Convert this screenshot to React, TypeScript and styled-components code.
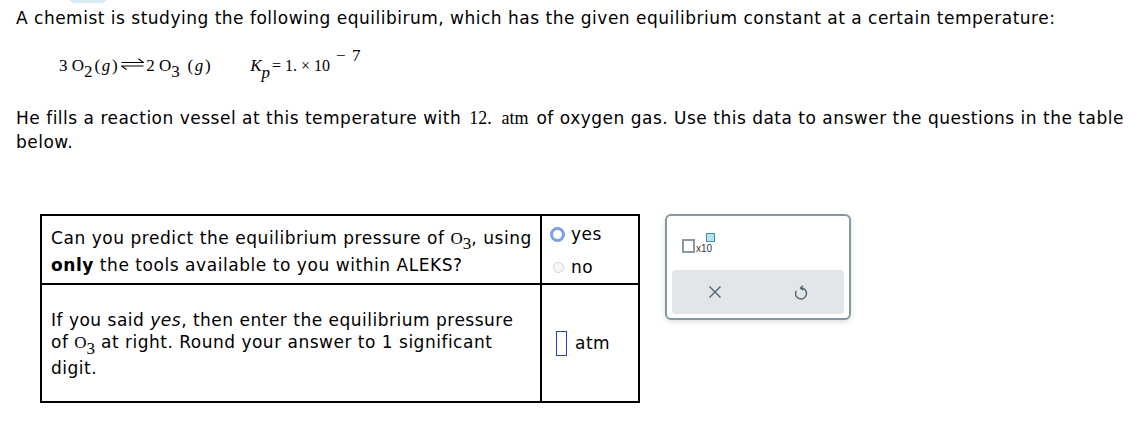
import React from "react";
import styled, { createGlobalStyle } from "styled-components";

const Global = createGlobalStyle`
  html, body { margin: 0; padding: 0; background: #fff; }
  body {
    font-family: "DejaVu Sans", Verdana, sans-serif;
    font-size: 17px;
    letter-spacing: 0.5px;
    color: #000;
  }
`;

const Page = styled.div`
  position: relative;
  width: 1142px;
  height: 428px;
  padding: 6px 0 0 16px;
  box-sizing: border-box;
  overflow: hidden;
`;

const TopTab = styled.div`
  position: absolute;
  left: 68px;
  top: -11px;
  width: 40px;
  height: 14px;
  border-radius: 8px;
  background: #d9ecf6;
`;

const Para = styled.p`
  margin: 0;
  line-height: 24px;
`;

const Serif = styled.span<{ $size?: number; $italic?: boolean; $spread?: number }>`
  font-family: "Liberation Serif", "Times New Roman", serif;
  font-size: ${(p) => p.$size ?? 16}px;
  font-style: ${(p) => (p.$italic ? "italic" : "normal")};
  letter-spacing: ${(p) => p.$spread ?? 0}px;
  line-height: 1;
`;

const Quantity = styled(Serif)`
  margin: 0 2px;
`;

const Equation = styled.div`
  box-sizing: border-box;
  height: 76px;
  padding: 21px 0 0 43px;
  line-height: 30px;
  font-family: "Liberation Serif", "Times New Roman", serif;
  font-size: 17px;
  letter-spacing: 0;
  white-space: pre;
`;

const Group = styled.span`
  margin-left: 2px;
  letter-spacing: 1.6px;
`;

const Sub = styled.span<{ $size?: number; $drop?: number }>`
  font-family: "Liberation Serif", "Times New Roman", serif;
  font-size: ${(p) => p.$size ?? 17}px;
  vertical-align: ${(p) => -(p.$drop ?? 6)}px;
  line-height: 1;
  letter-spacing: 0;
`;

const Value = styled(Serif)`
  margin-left: 2px;
`;

const Sup = styled.span`
  font-family: "Liberation Serif", "Times New Roman", serif;
  font-size: 17px;
  position: relative;
  top: -10px;
  line-height: 1;
  margin-left: 6px;
  letter-spacing: 1px;
`;

const Arrow = styled.svg`
  display: inline-block;
  width: 23px;
  height: 12px;
  margin: 0 2px 0 2px;
  vertical-align: 1px;
`;

const Gap = styled.span<{ $w: number }>`
  display: inline-block;
  width: ${(p) => p.$w}px;
`;

const Row = styled.div`
  display: flex;
  align-items: flex-start;
  gap: 25px;
  margin: 60px 0 0 24px;
`;

const Table = styled.div`
  display: grid;
  grid-template-columns: 498px 98px;
  grid-template-rows: 67px 118px;
  border: 2px solid #000;
  width: 596px;
  background: #fff;
`;

const Cell = styled.div<{ $right?: boolean; $bottom?: boolean }>`
  border-left: ${(p) => (p.$right ? "2px solid #000" : "none")};
  border-top: ${(p) => (p.$bottom ? "2px solid #000" : "none")};
  box-sizing: border-box;
  white-space: nowrap;
`;

const QuestionCell = styled(Cell)`
  padding: 9px 0 0 9px;
  line-height: 27px;
  letter-spacing: 0.55px;
`;

const QuestionCell2 = styled(Cell)`
  padding: 2px 0 0 9px;
  line-height: 22px;
  display: flex;
  align-items: center;
`;

const RadioCol = styled(Cell)`
  display: flex;
  flex-direction: column;
  padding: 8px 0 0 8px;
  gap: 13px;
`;

const RadioRow = styled.label`
  display: flex;
  align-items: center;
  height: 20px;
  line-height: 20px;
`;

const RadioDot = styled.span<{ $focused?: boolean }>`
  box-sizing: border-box;
  display: inline-block;
  border-radius: 50%;
  width: ${(p) => (p.$focused ? 15 : 11)}px;
  height: ${(p) => (p.$focused ? 15 : 11)}px;
  margin-left: ${(p) => (p.$focused ? 0 : 3)}px;
  margin-right: ${(p) => (p.$focused ? 6 : 7)}px;
  border: ${(p) => (p.$focused ? "3px solid #7d9ee9" : "1px solid #d2d2d2")};
  background: ${(p) => (p.$focused ? "#fff" : "#f7f7f7")};
`;

const AnswerCell = styled(Cell)`
  display: flex;
  align-items: center;
  padding: 0 0 0 14px;
  gap: 8px;
`;

const InputBox = styled.span`
  display: inline-block;
  box-sizing: border-box;
  width: 11px;
  height: 25px;
  border: 1px solid #2b3de8;
`;

const Panel = styled.div`
  box-sizing: border-box;
  width: 186px;
  height: 106px;
  border: 2px solid #8798a1;
  border-radius: 6px;
  background: #fff;
  box-shadow: 0 2px 5px rgba(60, 80, 90, 0.18);
  padding: 17px 5px 4px 5px;
  display: flex;
  flex-direction: column;
  justify-content: space-between;
`;

const ExpIcon = styled.div`
  position: relative;
  width: 40px;
  height: 22px;
  margin-left: 10px;
`;

const BigBox = styled.span`
  position: absolute;
  left: 0;
  top: 6px;
  width: 13px;
  height: 14px;
  box-sizing: border-box;
  border: 2px solid #8a989f;
  background: #fff;
`;

const SmallBox = styled.span`
  position: absolute;
  left: 24px;
  top: 0;
  width: 9px;
  height: 9px;
  box-sizing: border-box;
  border: 1.5px solid #3d93ad;
  background: #b7e1ec;
`;

const XTen = styled.span`
  position: absolute;
  left: 14px;
  top: 11px;
  font-family: "Liberation Sans", Arial, sans-serif;
  font-size: 10px;
  letter-spacing: 0;
  color: #333;
  line-height: 10px;
`;

const ButtonBar = styled.div`
  height: 44px;
  border-radius: 4px;
  background: #e2e6e9;
  display: flex;
  align-items: center;
  justify-content: space-around;
`;

const IconBtn = styled.button`
  border: none;
  background: transparent;
  padding: 0;
  width: 20px;
  height: 20px;
  display: flex;
  align-items: center;
  justify-content: center;
  color: #4c6472;
`;

export default function App() {
  return (
    <>
      <Global />
      <Page>
        <TopTab />
        <Para>
          A chemist is studying the following equilibirum, which has the given
          equilibrium constant at a certain temperature:
        </Para>
        <Equation>
          3 O<Sub $drop={6}>2</Sub>
          <Group>
            (<Serif $size={17} $italic $spread={1.6}>g</Serif>)
          </Group>
          <Arrow viewBox="0 0 23 12">
            <path d="M0.5 4.5 H22.5 L17.5 0.8" fill="none" stroke="#000" strokeWidth="1.1" />
            <path d="M22.5 8 H0.5 L5.5 11.5" fill="none" stroke="#000" strokeWidth="1.1" />
          </Arrow>
          2 O<Sub $drop={6}>3</Sub>
          <Group>
            {" "}(<Serif $size={17} $italic $spread={1.6}>g</Serif>)
          </Group>
          <Gap $w={38} />
          <Serif $size={17} $italic>K</Serif>
          <Sub $size={17} $drop={7}>
            <Serif $size={17} $italic>p</Serif>
          </Sub>
          <Value $size={16}>= 1. × 10</Value>
          <Sup>− 7</Sup>
        </Equation>
        <Para>
          He fills a reaction vessel at this temperature with{" "}
          <Quantity $size={18}>12.</Quantity>{" "}
          <Quantity $size={18}>atm</Quantity> of oxygen gas. Use this data to
          answer the questions in the table below.
        </Para>
        <Row>
          <Table>
            <QuestionCell>
              Can you predict the equilibrium pressure of{" "}
              <Serif $size={17}>O</Serif>
              <Sub $size={17} $drop={5}>3</Sub>, using
              <br />
              <b>only</b> the tools available to you within ALEKS?
            </QuestionCell>
            <RadioCol $right>
              <RadioRow>
                <RadioDot $focused />
                yes
              </RadioRow>
              <RadioRow>
                <RadioDot />
                no
              </RadioRow>
            </RadioCol>
            <QuestionCell2 $bottom>
              <div>
                If you said <i>yes</i>, then enter the equilibrium pressure
                <br />
                of <Serif $size={17}>O</Serif>
                <Sub $size={17} $drop={6}>3</Sub> at right. Round your answer
                to 1 significant
                <br />
                digit.
              </div>
            </QuestionCell2>
            <AnswerCell $right $bottom>
              <InputBox />
              <span>atm</span>
            </AnswerCell>
          </Table>
          <Panel>
            <ExpIcon>
              <BigBox />
              <XTen>x10</XTen>
              <SmallBox />
            </ExpIcon>
            <ButtonBar>
              <IconBtn aria-label="clear">
                <svg width="14" height="14" viewBox="0 0 14 14">
                  <path d="M1.5 1.5 L12.5 12.5 M12.5 1.5 L1.5 12.5" stroke="currentColor" strokeWidth="1.4" fill="none" />
                </svg>
              </IconBtn>
              <IconBtn aria-label="undo">
                <svg width="16" height="17" viewBox="0 0 16 17">
                  <path d="M8 4 A5.5 5.5 0 1 1 3.2 6.8" stroke="currentColor" strokeWidth="1.4" fill="none" />
                  <path d="M9.8 1.8 L7.6 4 L9.8 6.2" stroke="currentColor" strokeWidth="1.4" fill="none" />
                </svg>
              </IconBtn>
            </ButtonBar>
          </Panel>
        </Row>
      </Page>
    </>
  );
}
